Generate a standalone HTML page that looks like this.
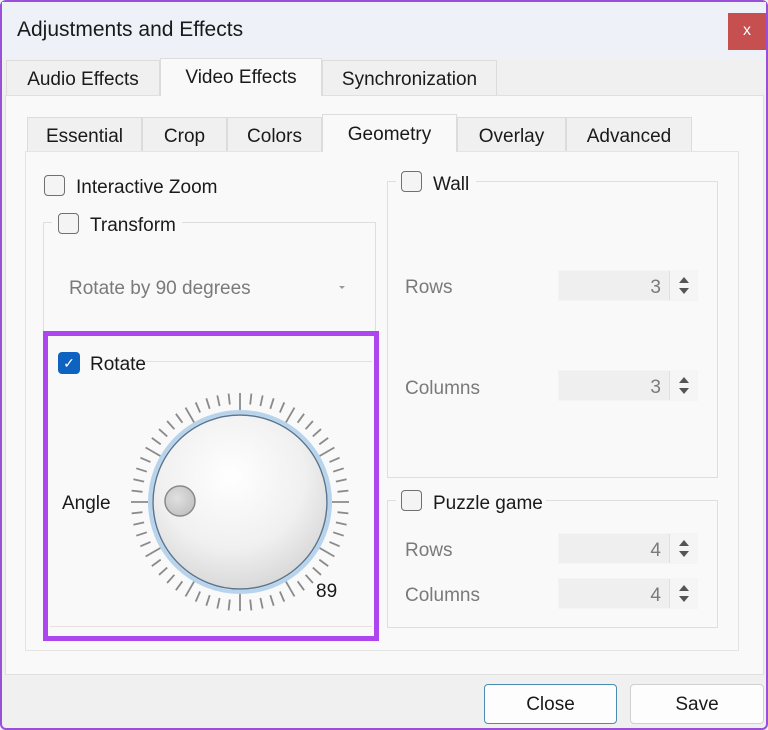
<!DOCTYPE html>
<html><head><style>
*{box-sizing:border-box;margin:0;padding:0}
body{width:768px;height:730px;overflow:hidden;background:#f0f0f0;font-family:"Liberation Sans",sans-serif;position:relative;color:#1a1a1a}
.a{position:absolute}
.t{font-size:19px;white-space:nowrap;line-height:20px}
.g{color:#7a7a7a}
.cb{width:21px;height:21px;border:1.5px solid #707070;border-radius:4px;background:#f4f4f4}
.tab{position:absolute;border:1px solid #dcdcdc;border-bottom:none;background:#f0f0f0;font-size:19px;text-align:center;white-space:nowrap}
.grp{position:absolute;border:1px solid #dedede}
.spin{position:absolute;width:140px;height:31px;background:#efefef;border:1px solid #f4f4f4}
.spin span{position:absolute;right:36px;top:6px;font-size:19px;color:#7a7a7a}
.spin i{position:absolute;right:0;top:0;width:28px;height:29px;border-left:1px solid #e0e0e0;background:#f5f5f5}
.up,.dn{position:absolute;left:9px;width:0;height:0;border-left:5px solid transparent;border-right:5px solid transparent}
.up{top:6px;border-bottom:6px solid #555}.dn{top:17px;border-top:6px solid #555}
.btn{position:absolute;height:40px;background:#fdfdfd;border:1px solid #d0d0d0;border-radius:4px;font-size:19px;text-align:center;line-height:40px}
</style></head><body>
<div class="a" style="left:0;top:0;width:768px;height:730px;border:2px solid #9a4fd8;border-radius:6px"></div>
<div class="a" style="left:2px;top:2px;width:764px;height:56px;background:#eef2f8"></div>
<div class="a t" style="left:17px;top:20px;font-size:21px">Adjustments and Effects</div>
<div class="a" style="left:728px;top:13px;width:38px;height:37px;background:#c64f4f;color:#fff;font-size:16px;text-align:center;line-height:36px">x</div>
<div class="tab" style="left:6px;top:60px;width:154px;height:35px;line-height:38px">Audio Effects</div>
<div class="tab" style="left:160px;top:58px;width:162px;height:38px;line-height:38px;background:#f9f9f9;z-index:2">Video Effects</div>
<div class="tab" style="left:322px;top:60px;width:175px;height:35px;line-height:38px">Synchronization</div>
<div class="a" style="left:5px;top:95px;width:759px;height:580px;background:#f9f9f9;border:1px solid #e0e0e0"></div>
<div class="tab" style="left:27px;top:117px;width:115px;height:34px;line-height:38px">Essential</div>
<div class="tab" style="left:142px;top:117px;width:85px;height:34px;line-height:38px">Crop</div>
<div class="tab" style="left:227px;top:117px;width:95px;height:34px;line-height:38px">Colors</div>
<div class="tab" style="left:322px;top:114px;width:135px;height:38px;line-height:40px;background:#f9f9f9;z-index:2">Geometry</div>
<div class="tab" style="left:457px;top:117px;width:109px;height:34px;line-height:38px">Overlay</div>
<div class="tab" style="left:566px;top:117px;width:126px;height:34px;line-height:38px">Advanced</div>
<div class="a" style="left:25px;top:151px;width:714px;height:500px;border:1px solid #e4e4e4;background:#f9f9f9"></div>

<div class="a cb" style="left:44px;top:175px"></div>
<div class="a t" style="left:76px;top:178px">Interactive Zoom</div>
<div class="grp" style="left:43px;top:222px;width:333px;height:112px"></div>
<div class="a" style="left:52px;top:210px;width:130px;height:26px;background:#f9f9f9"></div>
<div class="a cb" style="left:58px;top:213px"></div>
<div class="a t" style="left:90px;top:216px">Transform</div>
<div class="a t g" style="left:69px;top:279px">Rotate by 90 degrees</div>
<div class="a" style="left:339px;top:286px;border-left:3px solid transparent;border-right:3px solid transparent;border-top:3px solid #999"></div>

<div class="a" style="left:43px;top:331px;width:336px;height:310px;border:5px solid #ad46ee;background:#f9f9f9"></div>
<div class="a" style="left:110px;top:361px;width:262px;height:1px;background:#e0e0e0"></div>
<div class="a" style="left:50px;top:626px;width:322px;height:1px;background:#eadede"></div>
<div class="a" style="left:58px;top:352px;width:22px;height:22px;background:#0f63c0;border-radius:4px;color:#fff;font-size:14px;text-align:center;line-height:22px">✓</div>
<div class="a t" style="left:90px;top:355px">Rotate</div>
<div class="a t" style="left:62px;top:494px">Angle</div>
<div class="a t" style="left:316px;top:582px">89</div>
<svg class="a" style="left:0;top:0" width="768" height="730">
<defs><radialGradient id="k" cx="0.45" cy="0.35" r="0.7"><stop offset="0" stop-color="#ffffff"/><stop offset="0.6" stop-color="#f0f0f0"/><stop offset="1" stop-color="#d4d4d4"/></radialGradient>
<radialGradient id="d" cx="0.4" cy="0.4" r="0.6"><stop offset="0" stop-color="#e0e0e0"/><stop offset="1" stop-color="#c4c4c4"/></radialGradient></defs>
<g id="ticks" stroke="#8a8a8a" stroke-width="1.8"></g>
<circle cx="240" cy="502" r="90" fill="none" stroke="#b8d4ec" stroke-width="4"/>
<circle cx="240" cy="502" r="87" fill="url(#k)" stroke="#5a7690" stroke-width="1.5"/>
<circle cx="180" cy="501" r="15" fill="url(#d)" stroke="#8a8a8a" stroke-width="1.5"/>
</svg>
<script>
var g=document.getElementById('ticks'),s='';
for(var i=0;i<60;i++){var a=i*6*Math.PI/180,m=i%5==0,r1=m?91:98,r2=109;
s+='<line x1="'+(240+r1*Math.sin(a)).toFixed(1)+'" y1="'+(502-r1*Math.cos(a)).toFixed(1)+'" x2="'+(240+r2*Math.sin(a)).toFixed(1)+'" y2="'+(502-r2*Math.cos(a)).toFixed(1)+'"/>';}
g.innerHTML=s;
</script>

<div class="grp" style="left:387px;top:181px;width:331px;height:297px"></div>
<div class="a" style="left:396px;top:170px;width:80px;height:24px;background:#f9f9f9"></div>
<div class="a cb" style="left:401px;top:171px"></div>
<div class="a t" style="left:433px;top:175px">Wall</div>
<div class="a t g" style="left:405px;top:278px">Rows</div>
<div class="spin" style="left:558px;top:270px"><span>3</span><i><b class="up"></b><b class="dn"></b></i></div>
<div class="a t g" style="left:405px;top:379px">Columns</div>
<div class="spin" style="left:558px;top:370px"><span>3</span><i><b class="up"></b><b class="dn"></b></i></div>

<div class="grp" style="left:387px;top:500px;width:331px;height:128px"></div>
<div class="a" style="left:396px;top:489px;width:150px;height:24px;background:#f9f9f9"></div>
<div class="a cb" style="left:401px;top:490px"></div>
<div class="a t" style="left:433px;top:494px">Puzzle game</div>
<div class="a t g" style="left:405px;top:541px">Rows</div>
<div class="spin" style="left:558px;top:533px"><span>4</span><i><b class="up"></b><b class="dn"></b></i></div>
<div class="a t g" style="left:405px;top:586px">Columns</div>
<div class="spin" style="left:558px;top:578px"><span>4</span><i><b class="up"></b><b class="dn"></b></i></div>

<div class="btn" style="left:484px;top:684px;width:133px;border-color:#4a8bb4">Close</div>
<div class="btn" style="left:630px;top:684px;width:134px">Save</div>
</body></html>
